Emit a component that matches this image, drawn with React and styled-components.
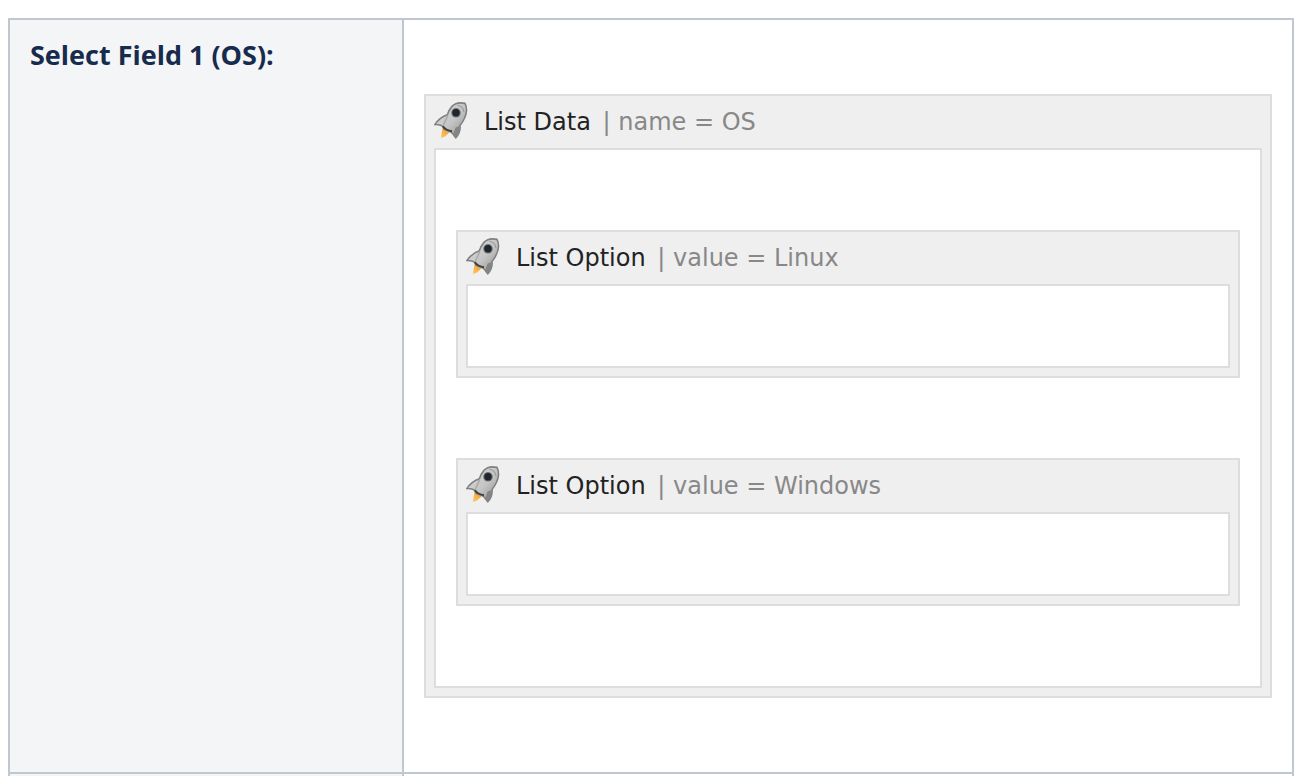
import React from 'react'
import styled, { createGlobalStyle } from 'styled-components'

function RocketIcon() {
  return (
    <Rocket viewBox="0 0 34 38" aria-hidden="true">
      <defs>
        <linearGradient id="hull" x1="0" y1="0" x2="1" y2="1">
          <stop offset="0.2" stopColor="#d4d4d4" />
          <stop offset="0.55" stopColor="#c4c4c4" />
          <stop offset="1" stopColor="#8c8c8c" />
        </linearGradient>
        <linearGradient id="flame" x1="1" y1="0" x2="0" y2="1">
          <stop offset="0" stopColor="#f0962a" />
          <stop offset="1" stopColor="#ffc964" />
        </linearGradient>
      </defs>
      <path d="M8.6 26 L6.8 36 L10.5 34.8 L16 30 Z" fill="url(#flame)" />
      <path
        d="M31 1.4 C26 0.2 21 1.2 18 4.4 C15.8 6.8 14.4 9.6 13.4 12.8 C9 14.2 4 18 0.8 22.6 C3.8 22.4 6.4 22.8 8.6 24.2 L10 27.2 L16 29.4 C18.6 31 20.2 33 21.8 35.8 C24.8 32.4 26.6 28.4 26 23.6 C29.6 19 32 14.2 32.5 9 C32.6 6 32.1 3.4 31 1.4 Z"
        fill="url(#hull)"
        stroke="#808080"
        strokeWidth="1.6"
        strokeLinejoin="round"
      />
      <path d="M21.6 25.6 L25.6 24 C26.2 28.4 24.6 32.4 21.8 35.6 L19.4 31.6 Z" fill="#858585" />
      <path d="M13.8 13.4 C12.4 16.6 11 19.8 9 23.8" fill="none" stroke="#a8a8a8" strokeWidth="1.4" />
      <path d="M8.8 24.2 C10.6 26.8 13.6 28.4 18 29.2" fill="none" stroke="#404040" strokeWidth="2" />
      <path d="M23.4 3.4 C27 3.8 29.4 6.2 29.8 10" fill="none" stroke="#a0a0a0" strokeWidth="1.4" />
      <circle cx="22" cy="10.8" r="4.8" fill="#70757a" />
      <circle cx="22" cy="10.8" r="3.7" fill="#20262c" />
    </Rocket>
  )
}

function Macro({ title, params, children }) {
  return (
    <MacroBox>
      <MacroHeader>
        <RocketIcon />
        <MacroTitle>
          {title} <MacroParams>| {params}</MacroParams>
        </MacroTitle>
      </MacroHeader>
      <MacroBody $filled={!!children}>{children}</MacroBody>
    </MacroBox>
  )
}

function App() {
  return (
    <Page>
      <GlobalStyle />
      <FieldTable>
        <tbody>
          <tr>
            <LabelCell scope="row">Select Field 1 (OS):</LabelCell>
            <ValueCell>
              <Macro title="List Data" params="name = OS">
                <Macro title="List Option" params="value = Linux" />
                <Macro title="List Option" params="value = Windows" />
              </Macro>
            </ValueCell>
          </tr>
          <tr>
            <LabelCell scope="row" />
            <ValueCell />
          </tr>
        </tbody>
      </FieldTable>
    </Page>
  )
}

export default App

const GlobalStyle = createGlobalStyle`
* {
  box-sizing: border-box;
}
body {
  margin: 0;
  background: #ffffff;
}
`

const Page = styled.main`
height: 100vh;
overflow: hidden;
padding: 18px 11px 0 8px;
`

const FieldTable = styled.table`
width: 100%;
table-layout: fixed;
border-collapse: collapse;
`

const LabelCell = styled.th`
width: 394px;
padding: 18px 20px;
border: 2px solid #c1c7d0;
background-color: #f4f5f7;
color: #172b4d;
font-family: 'Open Sans', sans-serif;
font-size: 27px;
font-weight: 700;
line-height: 34px;
text-align: left;
vertical-align: top;
`

const ValueCell = styled.td`
padding: 74px 20px;
border: 2px solid #c1c7d0;
vertical-align: top;
`

const MacroBox = styled.section`
padding: 0 8px 8px;
border: 2px solid #dddddd;
background-color: #efefef;
`

const MacroHeader = styled.header`
display: flex;
align-items: center;
gap: 16px;
height: 52px;
padding-bottom: 2px;
`

const Rocket = styled.svg`
width: 34px;
height: 38px;
flex: none;
`

const MacroTitle = styled.div`
padding-top: 2px;
color: #222222;
font-family: 'DejaVu Sans', sans-serif;
font-size: 24px;
line-height: 28px;
`

const MacroParams = styled.span`
margin-left: 4px;
color: #888888;
`

const MacroBody = styled.div`
display: flex;
flex-direction: column;
gap: 80px;
min-height: 84px;
padding: ${(props) => (props.$filled ? '80px 20px' : '0')};
border: 2px solid #dddddd;
background-color: #ffffff;
`
